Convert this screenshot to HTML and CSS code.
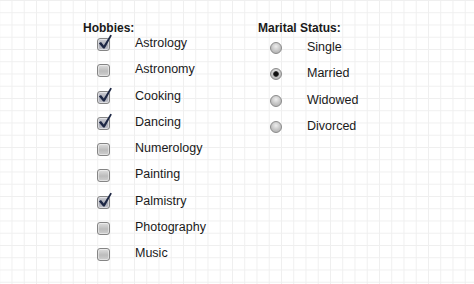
FILE: index.html
```html
<!DOCTYPE html>
<html lang="en">
<head>
    <meta charset="UTF-8">
    <meta name="viewport" content="width=device-width, initial-scale=1.0">
    <title>Hobbies and Marital Status</title>
    <link rel="stylesheet" href="styles.css">
</head>
<body>
    <div class="form">
        <!-- Hobbies -->
        <div class="group hobbies">
            <div class="title">Hobbies:</div>
            <div class="list">
                <div class="row"><span class="box checked"></span><span class="label">Astrology</span></div>
                <div class="row"><span class="box"></span><span class="label">Astronomy</span></div>
                <div class="row"><span class="box checked"></span><span class="label">Cooking</span></div>
                <div class="row"><span class="box checked"></span><span class="label">Dancing</span></div>
                <div class="row"><span class="box"></span><span class="label">Numerology</span></div>
                <div class="row"><span class="box"></span><span class="label">Painting</span></div>
                <div class="row"><span class="box checked"></span><span class="label">Palmistry</span></div>
                <div class="row"><span class="box"></span><span class="label">Photography</span></div>
                <div class="row"><span class="box"></span><span class="label">Music</span></div>
            </div>
        </div>

        <!-- Marital status -->
        <div class="group marital">
            <div class="title">Marital Status:</div>
            <div class="list">
                <div class="row"><span class="radio"></span><span class="label">Single</span></div>
                <div class="row"><span class="radio selected"></span><span class="label">Married</span></div>
                <div class="row"><span class="radio"></span><span class="label">Widowed</span></div>
                <div class="row"><span class="radio"></span><span class="label">Divorced</span></div>
            </div>
        </div>
    </div>

    <script>
        // draw the tick into every checked box
        var tick = '<svg class="tick" width="16" height="16" viewBox="0 -4 16 16">' +
            '<path d="M1.8 5.2 L4 4 L6.8 7.4 L13.4 -3.3 L14.9 -2.5 L7.7 10.6 L6.2 10.6 Z" fill="#1d2744"/></svg>';
        document.querySelectorAll(".box.checked").forEach(function (box) {
            box.innerHTML = tick;
        });
    </script>
</body>
</html>
```

FILE: styles.css
```css
body {
    margin: 0;
    height: 284px;
    font-family: 'Liberation Sans', Arial, sans-serif;
    color: #1a1a1a;
    background-color: #ffffff;
    background-image:
        linear-gradient(to right, #efefef 1px, transparent 1px),
        linear-gradient(to bottom, #efefef 1px, transparent 1px);
    background-size: 12.25px 12.25px;
    background-position: 11.5px 0;
}

.form {
    display: flex;
    padding: 21px 0 0 83px;
}

.hobbies {
    width: 175px;
}

.title {
    font-size: 12px;
    font-weight: bold;
    line-height: 14px;
}

.row {
    display: flex;
    align-items: flex-start;
    height: 26.25px;
}

.label {
    font-size: 12.5px;
    line-height: 16px;
}

.box {
    position: relative;
    box-sizing: border-box;
    width: 13px;
    height: 13px;
    margin: 3px 25px 0 14px;
    border: 1px solid #858585;
    border-radius: 3px;
    background: linear-gradient(#dedede, #bcbcbc 55%, #cfcfcf);
    box-shadow: inset 0 0 0 1px rgba(255, 255, 255, 0.45);
}

.box.checked {
    background: linear-gradient(#cfd0d6, #a9abb5 55%, #c2c3ca);
}

.tick {
    position: absolute;
    left: -1px;
    top: -5px;
    overflow: visible;
}

.marital .list {
    padding-top: 3.5px;
}

.marital .row {
    height: 26.6px;
}

.radio {
    box-sizing: border-box;
    width: 12px;
    height: 12px;
    margin: 3px 25px 0 12px;
    border: 1px solid #8a8a8a;
    border-radius: 50%;
    background: radial-gradient(circle at 50% 35%, #eeeeee, #c4c4c4 55%, #a8a8a8);
}

.radio.selected {
    background:
        radial-gradient(circle, #101010 0, #101010 1.8px, #4a4a4a 2.6px, transparent 3.2px),
        radial-gradient(circle at 50% 35%, #eeeeee, #c4c4c4 55%, #a8a8a8);
}
```
